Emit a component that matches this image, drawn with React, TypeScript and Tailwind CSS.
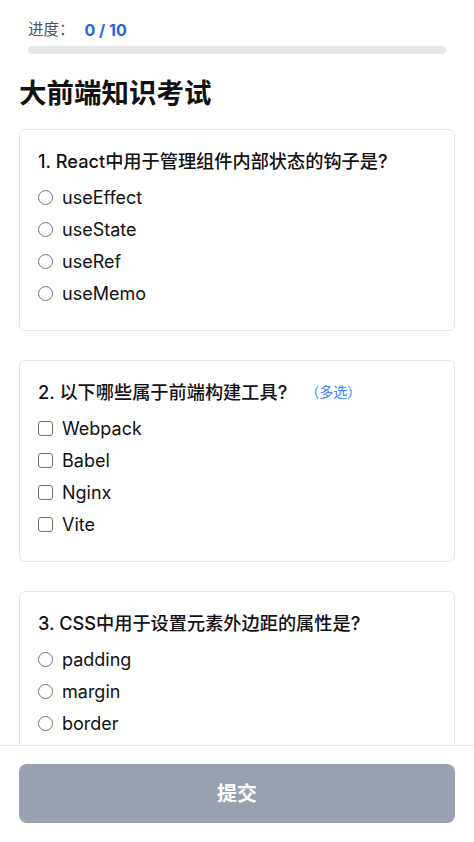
import React, { useState } from 'react';

interface Question {
    id: number;
    title: string;
    multiple?: boolean;
    options: string[];
}

const questions: Question[] = [
    { id: 1, title: 'React中用于管理组件内部状态的钩子是?', options: ['useEffect', 'useState', 'useRef', 'useMemo'] },
    { id: 2, title: '以下哪些属于前端构建工具?', multiple: true, options: ['Webpack', 'Babel', 'Nginx', 'Vite'] },
    { id: 3, title: 'CSS中用于设置元素外边距的属性是?', options: ['padding', 'margin', 'border', 'outline'] },
];

const App: React.FC = () => {
    const [answers, setAnswers] = useState<Record<number, string[]>>({});

    const answered = Object.values(answers).filter((a) => a.length > 0).length;

    const pick = (q: Question, opt: string) => {
        const current = answers[q.id] || [];
        let next: string[];
        if (q.multiple) {
            next = current.includes(opt) ? current.filter((o) => o !== opt) : [...current, opt];
        } else {
            next = [opt];
        }
        setAnswers({ ...answers, [q.id]: next });
    };

    return (
        <div className="min-h-screen bg-white text-[#111] font-['Inter','Noto_Sans_CJK_SC',sans-serif] pb-[120px]">
            <div className="px-[28px] pt-[20px]">
                <div className="flex items-center h-[20px]">
                    <span className="text-[15.5px] text-gray-600">进度：</span>
                    <span className="ml-[10px] text-[16px] font-bold text-[#2563eb]">{answered} / 10</span>
                </div>
                <div className="mt-[6px] h-2 rounded-full bg-gray-200 overflow-hidden">
                    <div className="h-full bg-[#2563eb]" style={{ width: `${(answered / 10) * 100}%` }} />
                </div>
            </div>

            <div className="px-[19px]">
                <h1 className="mt-[21px] mb-[18px] text-[27.5px] leading-[36px] font-bold">大前端知识考试</h1>

                <div className="flex flex-col gap-[29px]">
                    {questions.map((q) => (
                        <div key={q.id} className="border border-gray-200 rounded-md pt-[17px] pb-[21px] px-[18px]">
                            <div className="flex items-center text-[18.2px] leading-[28px] font-medium">
                                <span>{q.id}. {q.title}</span>
                                {q.multiple && <span className="ml-[18px] text-[14px] text-[#3b82f6] font-normal">（多选）</span>}
                            </div>
                            <div className="mt-[6px]">
                                {q.options.map((opt) => {
                                    const checked = (answers[q.id] || []).includes(opt);
                                    return (
                                        <div
                                            key={opt}
                                            onClick={() => pick(q, opt)}
                                            className="flex items-center h-[32px] cursor-pointer"
                                        >
                                            {q.multiple ? (
                                                <span className={`w-[15px] h-[15px] rounded-[3px] border ${checked ? 'bg-[#2563eb] border-[#2563eb]' : 'border-gray-500'}`} />
                                            ) : (
                                                <span className={`w-[15px] h-[15px] rounded-full border ${checked ? 'border-[5px] border-[#2563eb]' : 'border-gray-500'}`} />
                                            )}
                                            <span className="ml-[9px] text-[18px]">{opt}</span>
                                        </div>
                                    );
                                })}
                            </div>
                        </div>
                    ))}
                </div>
            </div>

            <div className="fixed bottom-0 left-0 right-0 bg-white border-t border-gray-200 px-[19px] pt-[18px] pb-[19px]">
                <button
                    disabled={answered < 10}
                    className="w-full h-[59px] rounded-lg bg-gray-400 text-white text-[20px] font-bold"
                >
                    提交
                </button>
            </div>
        </div>
    );
};

export default App;
